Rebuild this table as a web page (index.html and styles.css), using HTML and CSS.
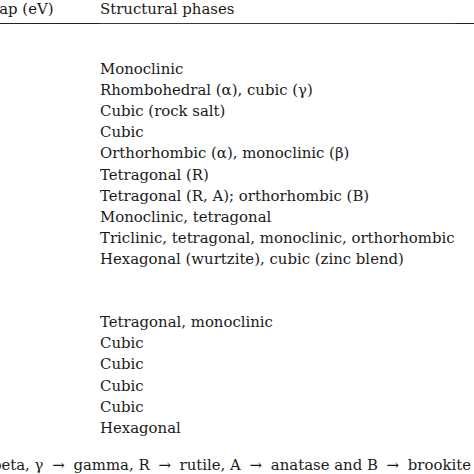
FILE: index.html
```html
<!DOCTYPE html>
<html>
<head>
<meta charset="utf-8">
<link rel="stylesheet" href="styles.css">
</head>
<body>
<div class="page">
  <table class="tbl">
    <thead>
      <tr>
        <th class="c1">Band gap (eV)</th>
        <th class="c2">Structural phases</th>
        <th class="c3"></th>
      </tr>
    </thead>
    <tbody>
      <tr><td class="c1"></td><td class="c2">&nbsp;</td><td class="c3"></td></tr>
      <tr><td class="c1"></td><td class="c2">Monoclinic</td><td class="c3"></td></tr>
      <tr><td class="c1"></td><td class="c2">Rhombohedral (α), cubic (γ)</td><td class="c3"></td></tr>
      <tr><td class="c1"></td><td class="c2">Cubic (rock salt)</td><td class="c3"></td></tr>
      <tr><td class="c1"></td><td class="c2">Cubic</td><td class="c3"></td></tr>
      <tr><td class="c1"></td><td class="c2">Orthorhombic (α), monoclinic (β)</td><td class="c3"></td></tr>
      <tr><td class="c1"></td><td class="c2">Tetragonal (R)</td><td class="c3"></td></tr>
      <tr><td class="c1"></td><td class="c2">Tetragonal (R, A); orthorhombic (B)</td><td class="c3"></td></tr>
      <tr><td class="c1"></td><td class="c2">Monoclinic, tetragonal</td><td class="c3"></td></tr>
      <tr><td class="c1"></td><td class="c2">Triclinic, tetragonal, monoclinic, orthorhombic</td><td class="c3"></td></tr>
      <tr><td class="c1"></td><td class="c2">Hexagonal (wurtzite), cubic (zinc blend)</td><td class="c3"></td></tr>
      <tr><td class="c1"></td><td class="c2">&nbsp;</td><td class="c3"></td></tr>
      <tr><td class="c1"></td><td class="c2">&nbsp;</td><td class="c3"></td></tr>
      <tr><td class="c1"></td><td class="c2">Tetragonal, monoclinic</td><td class="c3"></td></tr>
      <tr><td class="c1"></td><td class="c2">Cubic</td><td class="c3"></td></tr>
      <tr><td class="c1"></td><td class="c2">Cubic</td><td class="c3"></td></tr>
      <tr><td class="c1"></td><td class="c2">Cubic</td><td class="c3"></td></tr>
      <tr><td class="c1"></td><td class="c2">Cubic</td><td class="c3"></td></tr>
      <tr><td class="c1"></td><td class="c2">Hexagonal</td><td class="c3"></td></tr>
    </tbody>
  </table>
  <div class="note"><span>α <span class="arr">→</span> alpha, β <span class="arr">→</span> beta, γ <span class="arr">→</span> gamma, R <span class="arr">→</span> rutile, A <span class="arr">→</span> anatase and B <span class="arr">→</span> brookite</span></div>
</div>
</body>
</html>
```

FILE: styles.css
```css
html, body {
  margin: 0;
  padding: 0;
  background: #fff;
}
body {
  width: 474px;
  height: 474px;
  overflow: hidden;
  font-family: "DejaVu Serif", "Liberation Serif", serif;
  font-size: 14.9px;
  color: #1a1a1a;
}
.page {
  width: 474px;
}
.tbl {
  border-collapse: collapse;
  table-layout: fixed;
  width: 600px;
  margin-left: -54px;
}
.tbl th,
.tbl td {
  box-sizing: border-box;
}
.tbl th {
  font-weight: normal;
  text-align: left;
  line-height: 17px;
  padding: 1px 0 5px 0;
  border-bottom: 1.4px solid #222;
  white-space: nowrap;
}
.tbl th.c1 {
  text-align: right;
  padding-right: 57px;
}
.tbl td {
  padding: 0;
  line-height: 21.1px;
  white-space: nowrap;
}
.tbl tbody tr:first-child td {
  padding-top: 14px;
}
.c1 { width: 154px; }
.c2 { width: 355px; }
.c3 { width: 91px; }
.tbl th.c2 { border-bottom-color: #3a3a3a; }
.note {
  display: flex;
  justify-content: flex-end;
  padding-right: 3px;
  margin-top: 16px;
  white-space: nowrap;
  line-height: 21px;
}
.arr {
  margin: 0 4px;
}
```
